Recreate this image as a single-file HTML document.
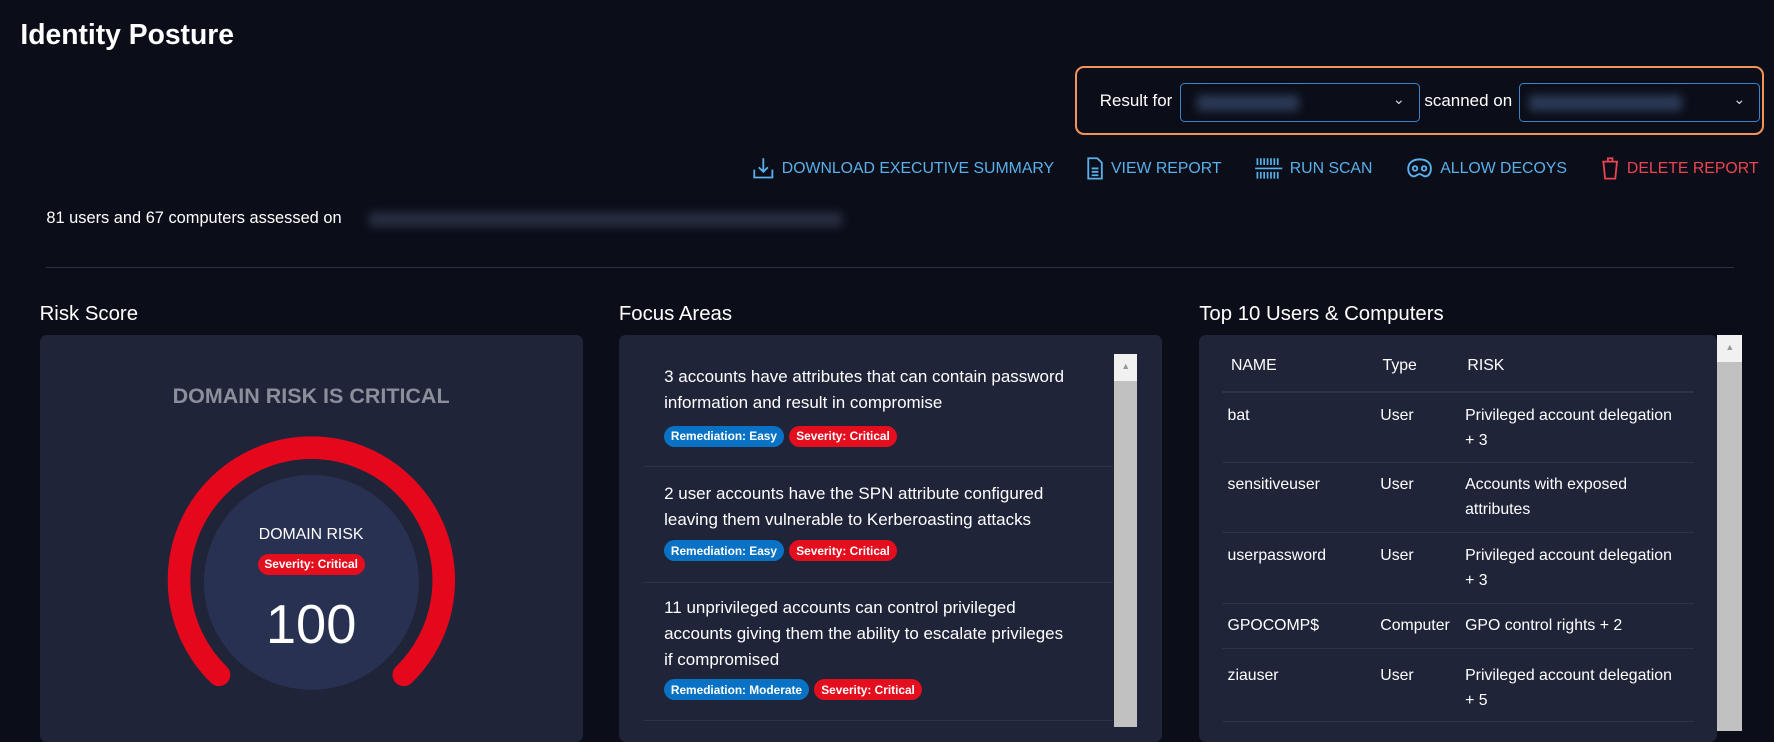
<!DOCTYPE html>
<html><head><meta charset="utf-8"><style>
html{zoom:1.13138}
body{margin:0;width:1568px;height:640px;overflow:hidden;background:#0b0e19;font-family:"Liberation Sans",sans-serif;color:#fff;position:relative}
.a{position:absolute}
h1{position:absolute;left:18px;top:16px;margin:0;font-size:25px;font-weight:600}
.box{left:950px;top:58px;width:606px;height:58px;border:2px solid #f29359;border-radius:8px}
.sel{border:1px solid #3b83c4;border-radius:4px;height:33px;background:#0b0e19}
.blur{background:#2b3a55;filter:blur(4px);height:14px;border-radius:3px}
.act{top:138px;font-size:14px;color:#5ab0ea;display:flex;align-items:center;gap:6px}
.sec{font-size:18px;top:268px}
.panel{top:296px;height:360px;background:#1f2439;border-radius:6px}
.t{font-size:15px;line-height:23px;left:587px;width:400px;white-space:nowrap}
.b{display:inline-block;font-size:10.5px;font-weight:bold;padding:3px 6px;border-radius:10px;margin-right:5px}
.bl{background:#0a72c4}.rd{background:#e40e1e}
.sep{height:1px;background:#2c3248}
.c{font-size:14px;line-height:22px;white-space:nowrap}
</style></head><body>
<h1>Identity Posture</h1>
<div class="a box"></div>
<div class="a" style="left:972px;top:80px;font-size:15px">Result for</div>
<div class="a sel" style="left:1043px;top:73px;width:210px"><div class="a blur" style="left:14px;top:10px;width:90px"></div><div class="a" style="right:12px;top:7px;color:#ccc;font-size:13px">⌄</div></div>
<div class="a" style="left:1259px;top:80px;font-size:15px">scanned on</div>
<div class="a sel" style="left:1343px;top:73px;width:211px"><div class="a blur" style="left:8px;top:10px;width:135px"></div><div class="a" style="right:12px;top:7px;color:#ccc;font-size:13px">⌄</div></div>

<div class="a act" style="left:665px"><svg width="20" height="22" viewBox="0 0 20 22" fill="none" stroke="#5ab0ea" stroke-width="1.6"><path d="M10 2v12M6 10l4 4 4-4M2 12v7h16v-7"/></svg>DOWNLOAD EXECUTIVE SUMMARY</div>
<div class="a act" style="left:960px"><svg width="16" height="22" viewBox="0 0 16 22" fill="none" stroke="#5ab0ea" stroke-width="1.6"><path d="M2 2h8l4 4v14H2zM5 11h6M5 14h6M5 17h6"/></svg>VIEW REPORT</div>
<div class="a act" style="left:1108px"><svg width="26" height="22" viewBox="0 0 26 22" fill="none" stroke="#5ab0ea" stroke-width="1.5"><path d="M1 11h24M3 2v6M6 2v6M9 2v6M12 2v6M15 2v6M18 2v6M21 2v6M3 14v6M6 14v6M9 14v6M12 14v6M15 14v6M18 14v6M21 14v6"/></svg>RUN SCAN</div>
<div class="a act" style="left:1243px"><svg width="24" height="22" viewBox="0 0 24 22" fill="none" stroke="#5ab0ea" stroke-width="1.7"><path d="M12 3C5 3 2 7 2 11c0 4 2 7 5 7 2 0 3-2 5-2s3 2 5 2c3 0 5-3 5-7 0-4-3-8-10-8z"/><circle cx="8" cy="11" r="2"/><circle cx="16" cy="11" r="2"/></svg>ALLOW DECOYS</div>
<div class="a act" style="left:1414px;color:#ec4451"><svg width="18" height="22" viewBox="0 0 18 22" fill="none" stroke="#ec4451" stroke-width="1.6"><path d="M2 5h14M7 5V2h4v3M3 5l1.5 15h9L15 5"/></svg>DELETE REPORT</div>

<div class="a" style="left:41px;top:185px;font-size:14.5px">81 users and 67 computers assessed on</div>
<div class="a blur" style="left:326px;top:187px;width:418px;background:#262e40"></div>
<div class="a" style="left:41px;top:236px;width:1492px;height:1px;background:#2a3140"></div>

<div class="a sec" style="left:35px">Risk Score</div>
<div class="a sec" style="left:547px">Focus Areas</div>
<div class="a sec" style="left:1060px">Top 10 Users &amp; Computers</div>

<div class="a panel" style="left:35px;width:480px"></div>
<div class="a panel" style="left:547px;width:480px"></div>
<div class="a panel" style="left:1060px;width:458px"></div>

<div class="a" style="left:35px;width:480px;top:339px;text-align:center;font-size:19px;font-weight:bold;color:#8b8f9b">DOMAIN RISK IS CRITICAL</div>
<svg class="a" style="left:135px;top:375px" width="280" height="240" viewBox="0 0 280 240">
<circle cx="140" cy="140" r="95" fill="#293152"/>
<path d="M58.3 221.7A117 117 0 1 1 221.7 221.7" fill="none" stroke="#e5081c" stroke-width="20" stroke-linecap="round"/>
</svg>
<div class="a" style="left:175px;width:200px;top:465px;text-align:center;font-size:14px">DOMAIN RISK</div>
<div class="a" style="left:175px;width:200px;top:488px;text-align:center"><span class="b rd" style="margin:0">Severity: Critical</span></div>
<div class="a" style="left:175px;width:200px;top:524px;text-align:center;font-size:48px">100</div>

<div class="a t" style="top:322px">3 accounts have attributes that can contain password<br>information and result in compromise</div>
<div class="a" style="left:587px;top:375px"><span class="b bl">Remediation: Easy</span><span class="b rd">Severity: Critical</span></div>
<div class="a sep" style="left:568px;top:412px;width:416px"></div>
<div class="a t" style="top:425px">2 user accounts have the SPN attribute configured<br>leaving them vulnerable to Kerberoasting attacks</div>
<div class="a" style="left:587px;top:476px"><span class="b bl">Remediation: Easy</span><span class="b rd">Severity: Critical</span></div>
<div class="a sep" style="left:568px;top:514px;width:416px"></div>
<div class="a t" style="top:526px">11 unprivileged accounts can control privileged<br>accounts giving them the ability to escalate privileges<br>if compromised</div>
<div class="a" style="left:587px;top:599px"><span class="b bl">Remediation: Moderate</span><span class="b rd">Severity: Critical</span></div>
<div class="a sep" style="left:568px;top:636px;width:416px"></div>
<div class="a" style="left:985px;top:313px;width:20px;height:330px;background:#c1c1c1"><div style="height:24px;background:#f1f1f1;color:#999;font-size:8px;text-align:center;line-height:22px">▲</div></div>

<div class="a c" style="left:1088px;top:313px">NAME</div><div class="a c" style="left:1222px;top:313px">Type</div><div class="a c" style="left:1297px;top:313px">RISK</div>
<div class="a sep" style="left:1080px;top:346px;width:417px"></div>
<div class="a c" style="left:1085px;top:357px">bat</div><div class="a c" style="left:1220px;top:357px">User</div><div class="a c" style="left:1295px;top:357px">Privileged account delegation<br>+ 3</div>
<div class="a sep" style="left:1080px;top:408px;width:417px"></div>
<div class="a c" style="left:1085px;top:418px">sensitiveuser</div><div class="a c" style="left:1220px;top:418px">User</div><div class="a c" style="left:1295px;top:418px">Accounts with exposed<br>attributes</div>
<div class="a sep" style="left:1080px;top:470px;width:417px"></div>
<div class="a c" style="left:1085px;top:481px">userpassword</div><div class="a c" style="left:1220px;top:481px">User</div><div class="a c" style="left:1295px;top:481px">Privileged account delegation<br>+ 3</div>
<div class="a sep" style="left:1080px;top:533px;width:417px"></div>
<div class="a c" style="left:1085px;top:543px">GPOCOMP$</div><div class="a c" style="left:1220px;top:543px">Computer</div><div class="a c" style="left:1295px;top:543px">GPO control rights + 2</div>
<div class="a sep" style="left:1080px;top:573px;width:417px"></div>
<div class="a c" style="left:1085px;top:587px">ziauser</div><div class="a c" style="left:1220px;top:587px">User</div><div class="a c" style="left:1295px;top:587px">Privileged account delegation<br>+ 5</div>
<div class="a sep" style="left:1080px;top:637px;width:417px"></div>
<div class="a" style="left:1518px;top:296px;width:22px;height:350px;background:#c1c1c1"><div style="height:24px;background:#f1f1f1;color:#999;font-size:8px;text-align:center;line-height:22px">▲</div></div>
</body></html>
